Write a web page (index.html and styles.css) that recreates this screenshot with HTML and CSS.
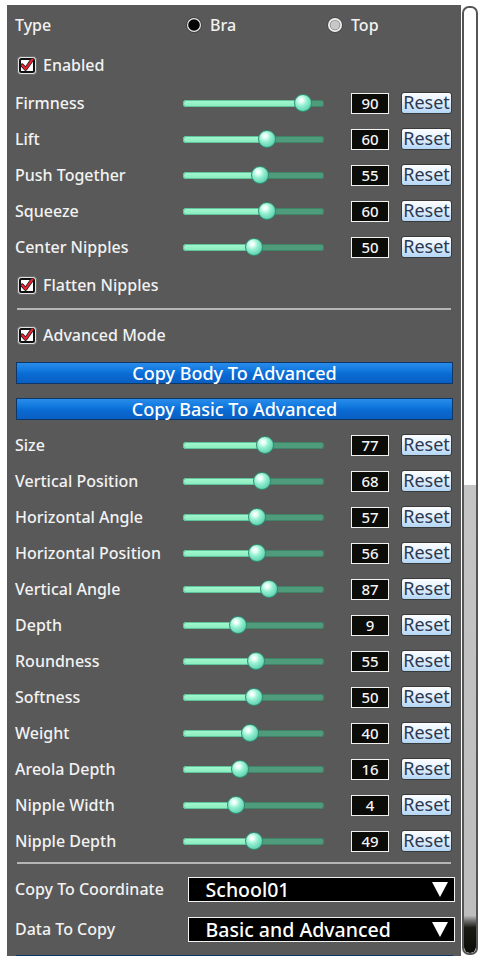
FILE: index.html
```html
<!DOCTYPE html>
<html>
<head>
<meta charset="utf-8">
<link rel="stylesheet" href="styles.css">
</head>
<body>
<div class="window">
  <div class="panel">
    <div class="row r40">
      <span class="label type-label">Type</span>
      <span class="radio radio-bra">
        <svg width="16" height="16" viewBox="0 0 16 16"><circle cx="8" cy="8" r="7.8" fill="#3a3a3a"/><circle cx="8" cy="8" r="7" fill="#ececec"/><circle cx="8" cy="8" r="5.8" fill="#050505"/></svg>
        <span>Bra</span>
      </span>
      <span class="radio">
        <svg width="16" height="16" viewBox="0 0 16 16"><circle cx="8" cy="8" r="7.8" fill="#444"/><circle cx="8" cy="8" r="7" fill="#f2f2f2"/><circle cx="8" cy="8" r="5.3" fill="#8a8a8a"/><circle cx="8" cy="8" r="4.5" fill="#c8c8c8"/></svg>
        <span>Top</span>
      </span>
    </div>

    <div class="row r40 check">
      <svg class="cb" width="20" height="19" viewBox="0 0 20 19"><rect x="0.5" y="0.5" width="19" height="18" rx="3.5" fill="#e4e4e4" stroke="#6a6a6a"/><rect x="3" y="3" width="14" height="13" rx="1.5" fill="#fff" stroke="#111" stroke-width="2"/><path d="M5.2 9.2 L8.6 13 L15.2 3.6" fill="none" stroke="#222" stroke-width="3.6" stroke-linecap="round" stroke-linejoin="round"/><path d="M5.2 9.2 L8.6 13 L15.2 3.6" fill="none" stroke="#ee2233" stroke-width="2" stroke-linecap="round" stroke-linejoin="round"/></svg>
      <span class="label">Enabled</span>
    </div>

    <div class="row r36 srow"><span class="label slabel">Firmness</span><div class="slider" style="--x:120px"><div class="fill"></div><div class="thumb"></div></div><span class="num">90</span><span class="reset">Reset</span></div>
    <div class="row r36 srow"><span class="label slabel">Lift</span><div class="slider" style="--x:83.5px"><div class="fill"></div><div class="thumb"></div></div><span class="num">60</span><span class="reset">Reset</span></div>
    <div class="row r36 srow"><span class="label slabel">Push Together</span><div class="slider" style="--x:77.4px"><div class="fill"></div><div class="thumb"></div></div><span class="num">55</span><span class="reset">Reset</span></div>
    <div class="row r36 srow"><span class="label slabel">Squeeze</span><div class="slider" style="--x:83.5px"><div class="fill"></div><div class="thumb"></div></div><span class="num">60</span><span class="reset">Reset</span></div>
    <div class="row r36 srow"><span class="label slabel">Center Nipples</span><div class="slider" style="--x:71.3px"><div class="fill"></div><div class="thumb"></div></div><span class="num">50</span><span class="reset">Reset</span></div>

    <div class="row r40 check">
      <svg class="cb" width="20" height="19" viewBox="0 0 20 19"><rect x="0.5" y="0.5" width="19" height="18" rx="3.5" fill="#e4e4e4" stroke="#6a6a6a"/><rect x="3" y="3" width="14" height="13" rx="1.5" fill="#fff" stroke="#111" stroke-width="2"/><path d="M5.2 9.2 L8.6 13 L15.2 3.6" fill="none" stroke="#222" stroke-width="3.6" stroke-linecap="round" stroke-linejoin="round"/><path d="M5.2 9.2 L8.6 13 L15.2 3.6" fill="none" stroke="#ee2233" stroke-width="2" stroke-linecap="round" stroke-linejoin="round"/></svg>
      <span class="label">Flatten Nipples</span>
    </div>

    <div class="sep"></div>

    <div class="row r40 check">
      <svg class="cb" width="20" height="19" viewBox="0 0 20 19"><rect x="0.5" y="0.5" width="19" height="18" rx="3.5" fill="#e4e4e4" stroke="#6a6a6a"/><rect x="3" y="3" width="14" height="13" rx="1.5" fill="#fff" stroke="#111" stroke-width="2"/><path d="M5.2 9.2 L8.6 13 L15.2 3.6" fill="none" stroke="#222" stroke-width="3.6" stroke-linecap="round" stroke-linejoin="round"/><path d="M5.2 9.2 L8.6 13 L15.2 3.6" fill="none" stroke="#ee2233" stroke-width="2" stroke-linecap="round" stroke-linejoin="round"/></svg>
      <span class="label">Advanced Mode</span>
    </div>

    <div class="btn btn-first">Copy Body To Advanced</div>
    <div class="btn btn-second">Copy Basic To Advanced</div>

    <div class="adv">
      <div class="row r36 srow"><span class="label slabel">Size</span><div class="slider" style="--x:82.4px"><div class="fill"></div><div class="thumb"></div></div><span class="num">77</span><span class="reset">Reset</span></div>
      <div class="row r36 srow"><span class="label slabel">Vertical Position</span><div class="slider" style="--x:78.6px"><div class="fill"></div><div class="thumb"></div></div><span class="num">68</span><span class="reset">Reset</span></div>
      <div class="row r36 srow"><span class="label slabel">Horizontal Angle</span><div class="slider" style="--x:74.1px"><div class="fill"></div><div class="thumb"></div></div><span class="num">57</span><span class="reset">Reset</span></div>
      <div class="row r36 srow"><span class="label slabel">Horizontal Position</span><div class="slider" style="--x:73.7px"><div class="fill"></div><div class="thumb"></div></div><span class="num">56</span><span class="reset">Reset</span></div>
      <div class="row r36 srow"><span class="label slabel">Vertical Angle</span><div class="slider" style="--x:86.3px"><div class="fill"></div><div class="thumb"></div></div><span class="num">87</span><span class="reset">Reset</span></div>
      <div class="row r36 srow"><span class="label slabel">Depth</span><div class="slider" style="--x:54.5px"><div class="fill"></div><div class="thumb"></div></div><span class="num">9</span><span class="reset">Reset</span></div>
      <div class="row r36 srow"><span class="label slabel">Roundness</span><div class="slider" style="--x:73.3px"><div class="fill"></div><div class="thumb"></div></div><span class="num">55</span><span class="reset">Reset</span></div>
      <div class="row r36 srow"><span class="label slabel">Softness</span><div class="slider" style="--x:71.3px"><div class="fill"></div><div class="thumb"></div></div><span class="num">50</span><span class="reset">Reset</span></div>
      <div class="row r36 srow"><span class="label slabel">Weight</span><div class="slider" style="--x:67.2px"><div class="fill"></div><div class="thumb"></div></div><span class="num">40</span><span class="reset">Reset</span></div>
      <div class="row r36 srow"><span class="label slabel">Areola Depth</span><div class="slider" style="--x:57.4px"><div class="fill"></div><div class="thumb"></div></div><span class="num">16</span><span class="reset">Reset</span></div>
      <div class="row r36 srow"><span class="label slabel">Nipple Width</span><div class="slider" style="--x:52.5px"><div class="fill"></div><div class="thumb"></div></div><span class="num">4</span><span class="reset">Reset</span></div>
      <div class="row r36 srow"><span class="label slabel">Nipple Depth</span><div class="slider" style="--x:70.9px"><div class="fill"></div><div class="thumb"></div></div><span class="num">49</span><span class="reset">Reset</span></div>
    </div>

    <div class="sep"></div>

    <div class="row r40">
      <span class="label dlabel">Copy To Coordinate</span>
      <div class="dropdown"><span>School01</span><span class="tri"></span></div>
    </div>
    <div class="row r40">
      <span class="label dlabel">Data To Copy</span>
      <div class="dropdown"><span>Basic and Advanced</span><span class="tri"></span></div>
    </div>

    <div class="btn btn-cut"></div>
  </div>
  <div class="scrollbar"><div class="thumbbar"></div></div>
</div>
</body>
</html>
```

FILE: styles.css
```css
html, body {
  margin: 0;
  padding: 0;
  background: #ffffff;
}

body {
  font-family: "Noto Sans", "Liberation Sans", sans-serif;
  color: #f2f2f2;
}

.window {
  display: flex;
  align-items: flex-start;
  padding: 5px 0 0 7px;
}

.panel {
  width: 454px;
  height: 951px;
  overflow: hidden;
  background: #595959;
  padding: 0 9px 0 8px;
  box-sizing: border-box;
  display: flex;
  flex-direction: column;
}

.scrollbar {
  width: 16px;
  height: 949px;
  margin: 1px 0 0 1px;
  box-sizing: border-box;
  border: 2px solid #555;
  border-radius: 7px;
  background: #ffffff;
  display: flex;
  flex-direction: column;
  justify-content: flex-end;
  overflow: hidden;
}

.thumbbar {
  height: 468px;
  background: linear-gradient(#c4c4c4 0%, #bdbdbd 92%, #6a6a6a 93.2%, #1a1a14 94.6%, #0c0c08 100%);
  border-bottom-left-radius: 6px;
  border-bottom-right-radius: 6px;
}

.row {
  display: flex;
  align-items: center;
  flex-shrink: 0;
}

.r40 { height: 40px; }
.r36 { height: 36px; }

.label {
  font-size: 16px;
  font-weight: 500;
  line-height: 20px;
  white-space: nowrap;
}

.type-label { width: 171px; }

.radio {
  display: flex;
  align-items: center;
  gap: 8px;
  font-size: 16px;
  font-weight: 500;
}

.radio svg { display: block; }

.radio-bra { width: 141px; }

.check { padding-left: 2px; gap: 6px; }
.cb { display: block; }

.slabel { width: 168px; }

.slider {
  position: relative;
  width: 141px;
  height: 7px;
  border-radius: 4px;
  background: #4f9c7c;
  box-shadow: inset 0 0 0 1px #3f8466;
  flex-shrink: 0;
}

.fill {
  width: var(--x);
  height: 7px;
  border-radius: 4px;
  background: linear-gradient(#a6f7d0, #86ecbd);
  box-shadow: inset 0 0 0 1px #5fc49b;
}

.thumb {
  position: absolute;
  left: calc(var(--x) - 9px);
  top: -6px;
  width: 18px;
  height: 18px;
  box-sizing: border-box;
  border-radius: 50%;
  border: 1px solid #2e8f72;
  background: radial-gradient(circle at 38% 32%, #ffffff 0%, #e8fff6 14%, #96f0d2 38%, #64d6b4 72%, #3fae90 100%);
}

.num {
  margin-left: 27px;
  width: 38px;
  height: 21px;
  box-sizing: border-box;
  border: 1px solid #f2f2f2;
  background: #0b0b07;
  color: #f4f4f4;
  font-size: 15px;
  font-weight: 500;
  line-height: 19px;
  text-align: center;
}

.reset {
  margin-left: 12px;
  width: 51px;
  height: 22px;
  box-sizing: border-box;
  border: 1px solid #3a3a3a;
  border-radius: 3px;
  background: linear-gradient(#fbfdff 0%, #e4f0fc 45%, #b3d6f6 100%);
  color: #2b3850;
  font-size: 18px;
  line-height: 19px;
  text-align: center;
}

.sep {
  flex-shrink: 0;
  height: 10px;
  margin: 0 1px 0 2px;
}

.sep::before {
  content: "";
  display: block;
  margin-top: 3px;
  height: 2px;
  background: #b5b5b5;
}

.btn {
  flex-shrink: 0;
  margin-left: 1px;
  width: 437px;
  height: 22px;
  box-sizing: border-box;
  border: 1px solid #0c3766;
  background: linear-gradient(#2a8cea 0%, #127ae0 35%, #0a6bd4 55%, #0a5fc2 100%);
  color: #ffffff;
  font-size: 18px;
  font-weight: 500;
  line-height: 20px;
  text-align: center;
}

.btn-first { margin-top: 7px; }
.btn-second { margin-top: 14px; margin-bottom: 7px; }
.btn-cut { margin-top: 6px; }

.adv { display: flex; flex-direction: column; flex-shrink: 0; }

.dlabel { width: 173px; }

.dropdown {
  width: 268px;
  height: 25px;
  box-sizing: border-box;
  border: 1px solid #f2f2f2;
  background: #000;
  color: #fff;
  display: flex;
  align-items: center;
  justify-content: space-between;
  padding: 0 6px 0 17px;
  font-size: 19.5px;
  font-weight: 500;
  margin-right: -3px;
}

.tri {
  width: 0;
  height: 0;
  border-left: 8px solid transparent;
  border-right: 8px solid transparent;
  border-top: 15px solid #fff;
}
```
